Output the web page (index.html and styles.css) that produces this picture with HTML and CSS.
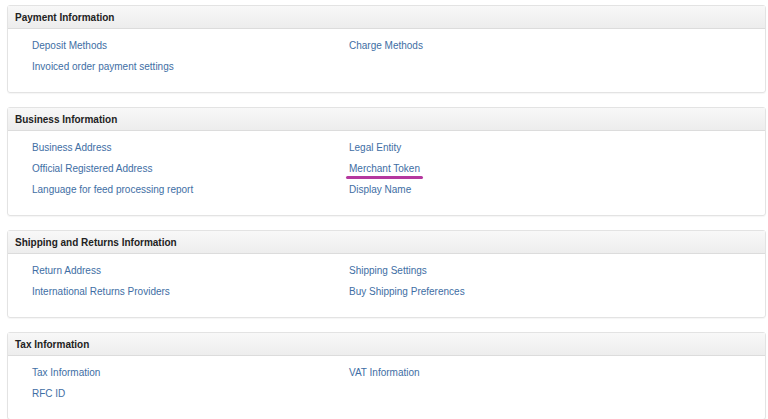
FILE: index.html
```html
<!DOCTYPE html>
<html>
<head>
    <title>Account Info</title>
    <link rel="stylesheet" href="styles.css">
</head>
<body>
    <div class="section">
        <div class="section-head">Payment Information</div>
        <div class="section-body">
            <div class="col">
                <a href="#">Deposit Methods</a>
                <a href="#">Invoiced order payment settings</a>
            </div>
            <div class="col">
                <a href="#">Charge Methods</a>
            </div>
        </div>
    </div>

    <div class="section">
        <div class="section-head">Business Information</div>
        <div class="section-body">
            <div class="col">
                <a href="#">Business Address</a>
                <a href="#">Official Registered Address</a>
                <a href="#">Language for feed processing report</a>
            </div>
            <div class="col">
                <a href="#">Legal Entity</a>
                <a href="#" class="marked">Merchant Token</a>
                <a href="#">Display Name</a>
            </div>
        </div>
    </div>

    <div class="section">
        <div class="section-head">Shipping and Returns Information</div>
        <div class="section-body">
            <div class="col">
                <a href="#">Return Address</a>
                <a href="#">International Returns Providers</a>
            </div>
            <div class="col">
                <a href="#">Shipping Settings</a>
                <a href="#">Buy Shipping Preferences</a>
            </div>
        </div>
    </div>

    <div class="section">
        <div class="section-head">Tax Information</div>
        <div class="section-body">
            <div class="col">
                <a href="#">Tax Information</a>
                <a href="#">RFC ID</a>
            </div>
            <div class="col">
                <a href="#">VAT Information</a>
            </div>
        </div>
    </div>
</body>
</html>
```

FILE: styles.css
```css
body {
    margin: 0;
    padding: 5px 2px 0 7px;
    background: #fff;
    font-family: "Liberation Sans", Arial, sans-serif;
    font-size: 10px;
    color: #333;
}
.section {
    border: 1px solid #e3e3e3;
    border-radius: 3px;
    margin-bottom: 14px;
    box-shadow: 0 1px 1px rgba(0, 0, 0, 0.04);
}
.section-head {
    height: 22px;
    line-height: 24px;
    padding-left: 7px;
    font-weight: bold;
    color: #222;
    background: linear-gradient(#f8f8f8, #ededed);
    border-bottom: 1px solid #dcdcdc;
}
.section-body {
    display: grid;
    grid-template-columns: 317px 1fr;
    padding: 6px 0 15px 24px;
}
.col {
    display: flex;
    flex-direction: column;
}
.col a {
    height: 21px;
    line-height: 21px;
    color: #3e6ea4;
    text-decoration: none;
}
.marked {
    position: relative;
    align-self: flex-start;
}
.marked::after {
    content: "";
    position: absolute;
    left: -3px;
    right: -3px;
    bottom: 0;
    height: 3px;
    border-radius: 2px;
    background: #b5389f;
}
```
